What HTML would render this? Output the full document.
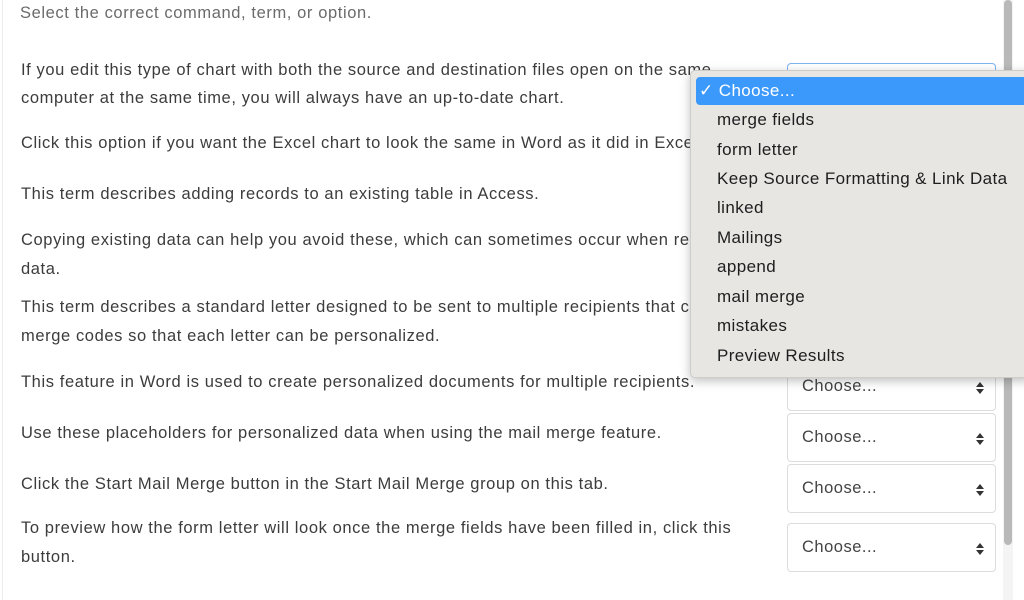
<!DOCTYPE html>
<html><head><style>
body{margin:0;width:1024px;height:600px;overflow:hidden;background:#fff;font-family:"Liberation Sans",sans-serif;position:relative}
.l{position:absolute;left:21px;font-size:16.5px;letter-spacing:0.6px;color:#3c3c3c;white-space:nowrap;line-height:20px}
.h{color:#6b6b6b;left:20px}
.s{position:absolute;left:787px;width:207px;height:47px;border:1px solid #dcdcdc;border-radius:4px;background:#fff}
.s span{position:absolute;left:14px;top:14px;font-size:16.5px;letter-spacing:0.5px;color:#444}
.s i{position:absolute;right:15px;top:19px;width:0;height:0}
.s i:before{content:"";position:absolute;left:-4px;top:0;border:4px solid transparent;border-top:0;border-bottom:5px solid #333}
.s i:after{content:"";position:absolute;left:-4px;top:7px;border:4px solid transparent;border-bottom:0;border-top:5px solid #333}
#dd{position:absolute;left:690px;top:70px;width:340px;height:306px;background:#e8e6e3;border:1px solid #cfcdca;border-radius:5px;box-shadow:0 3px 10px rgba(0,0,0,.25)}
.o{position:absolute;left:26px;font-size:17px;letter-spacing:0.4px;color:#1e1e1e;line-height:20px;white-space:nowrap}
#hl{position:absolute;left:5px;top:6px;width:340px;height:28px;background:#3b99fc;border-radius:4px}
</style></head><body>
<div style="position:absolute;left:2px;top:0;width:1px;height:600px;background:#ececec"></div>
<div style="position:absolute;left:1003px;top:0;width:10px;height:600px;background:#f4f4f4"></div>
<div style="position:absolute;left:1004px;top:0;width:8px;height:545px;background:#b9b9b9;border-radius:4px"></div>
<div class="l h" style="top:3px">Select the correct command, term, or option.</div>
<div class="l" style="top:60px">If you edit this type of chart with both the source and destination files open on the same</div>
<div class="l" style="top:88px">computer at the same time, you will always have an up-to-date chart.</div>
<div class="l" style="top:133px">Click this option if you want the Excel chart to look the same in Word as it did in Excel.</div>
<div class="l" style="top:184px">This term describes adding records to an existing table in Access.</div>
<div class="l" style="top:230px">Copying existing data can help you avoid these, which can sometimes occur when re-entering</div>
<div class="l" style="top:259px">data.</div>
<div class="l" style="top:297px">This term describes a standard letter designed to be sent to multiple recipients that contains</div>
<div class="l" style="top:326px">merge codes so that each letter can be personalized.</div>
<div class="l" style="top:372px">This feature in Word is used to create personalized documents for multiple recipients.</div>
<div class="l" style="top:423px">Use these placeholders for personalized data when using the mail merge feature.</div>
<div class="l" style="top:474px">Click the Start Mail Merge button in the Start Mail Merge group on this tab.</div>
<div class="l" style="top:518px">To preview how the form letter will look once the merge fields have been filled in, click this</div>
<div class="l" style="top:547px">button.</div>
<div class="s" style="top:63px;border-color:#7fb3f0"></div>
<div class="s" style="top:362px"><span>Choose...</span><i></i></div>
<div class="s" style="top:413px"><span>Choose...</span><i></i></div>
<div class="s" style="top:464px"><span>Choose...</span><i></i></div>
<div class="s" style="top:523px"><span>Choose...</span><i></i></div>
<div id="dd">
<div id="hl"></div>
<div class="o" style="left:8px;top:10px;color:#fff">✓ Choose...</div>
<div class="o" style="top:39px">merge fields</div>
<div class="o" style="top:69px">form letter</div>
<div class="o" style="top:98px">Keep Source Formatting &amp; Link Data</div>
<div class="o" style="top:127px">linked</div>
<div class="o" style="top:157px">Mailings</div>
<div class="o" style="top:186px">append</div>
<div class="o" style="top:216px">mail merge</div>
<div class="o" style="top:245px">mistakes</div>
<div class="o" style="top:275px">Preview Results</div>
</div>
</body></html>
